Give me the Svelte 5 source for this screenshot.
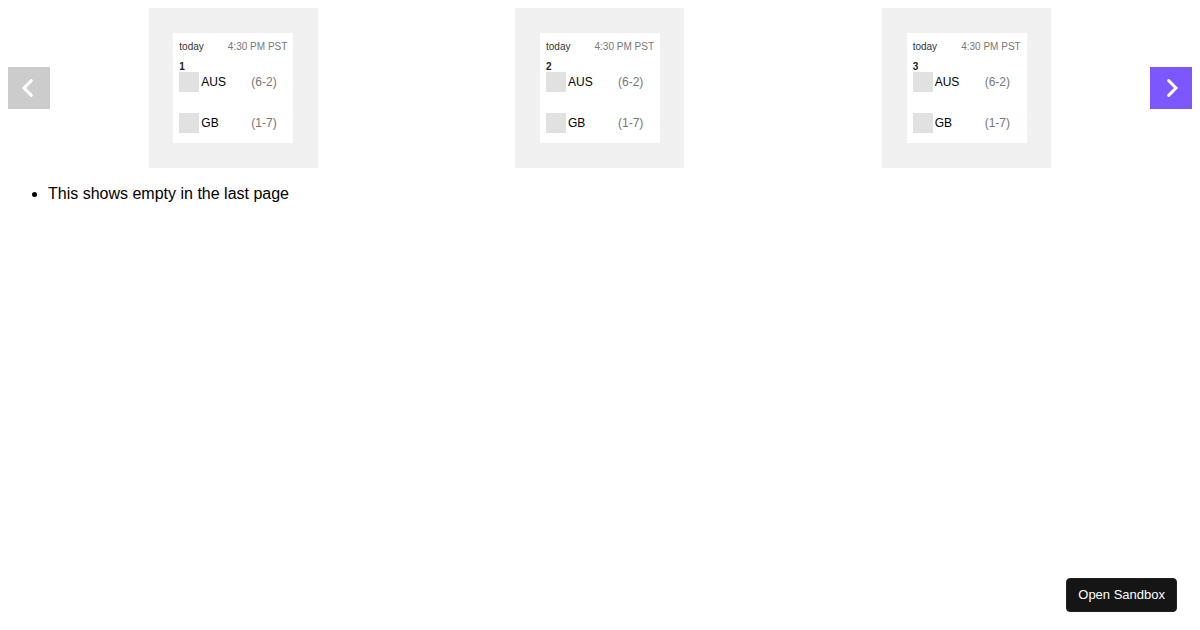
<script lang="ts">
	type Team = { name: string; record: string };
	type Game = { id: number; day: string; time: string; teams: Team[] };

	const PER_PAGE = 3;

	const games: Game[] = Array.from({ length: 8 }, (_, i) => ({
		id: i + 1,
		day: 'today',
		time: '4:30 PM PST',
		teams: [
			{ name: 'AUS', record: '(6-2)' },
			{ name: 'GB', record: '(1-7)' }
		]
	}));

	let page = $state(0);
	const lastPage = Math.ceil(games.length / PER_PAGE) - 1;
	let visible = $derived(games.slice(page * PER_PAGE, (page + 1) * PER_PAGE));
</script>

<div class="app">
	<div class="carousel">
		<button class="arrow" aria-label="Previous" disabled={page === 0} onclick={() => page--}>
			<svg viewBox="0 0 42 42"><path d="M23.3 13.6L16 21l7.3 7.4" /></svg>
		</button>

		<div class="slides">
			{#each visible as game (game.id)}
				<div class="slide">
					<article class="card">
						<div class="when">
							<span class="day">{game.day}</span>
							<span class="time">{game.time}</span>
						</div>
						<div class="number">{game.id}</div>
						<div class="teams">
							{#each game.teams as team}
								<div class="team">
									<span class="flag"></span>
									<span class="name">{team.name}</span>
									<span class="record">{team.record}</span>
								</div>
							{/each}
						</div>
					</article>
				</div>
			{/each}
		</div>

		<button class="arrow" aria-label="Next" disabled={page === lastPage} onclick={() => page++}>
			<svg viewBox="0 0 42 42"><path d="M18.7 13.6L26 21l-7.3 7.4" /></svg>
		</button>
	</div>

	<ul>
		<li>This shows empty in the last page</li>
	</ul>

	<button class="sandbox">Open Sandbox</button>
</div>

<style>
	:global(body) {
		background: #fff;
		font-family: 'Liberation Sans', Arial, sans-serif;
	}

	.app {
		padding: 8px;
	}

	.carousel {
		display: flex;
		align-items: center;
	}

	.arrow {
		width: 42px;
		height: 42px;
		flex-shrink: 0;
		padding: 0;
		border: 0;
		background: #7c57ff;
		color: #fff;
		cursor: pointer;
	}

	.arrow:disabled {
		background: #ccc;
		cursor: default;
	}

	.arrow svg {
		display: block;
		width: 100%;
		fill: none;
		stroke: currentColor;
		stroke-width: 3;
		stroke-linecap: round;
	}

	.slides {
		display: grid;
		grid-template-columns: repeat(3, 1fr);
		flex: 1;
		justify-items: center;
	}

	.slide {
		display: flex;
		justify-content: center;
		min-width: 169px;
		box-sizing: border-box;
		padding: 25px 0;
		background: #f0f0f0;
	}

	.card {
		box-sizing: border-box;
		width: 120px;
		padding: 6px 6px 10px;
		background: #fff;
		font-size: 12px;
	}

	.when {
		display: flex;
		justify-content: space-between;
		font-size: 10px;
		line-height: 16px;
		white-space: nowrap;
	}

	.day {
		color: #333;
	}

	.time {
		color: #777;
	}

	.number {
		margin-top: 7px;
		color: #222;
		font-size: 10px;
		font-weight: bold;
		line-height: 10px;
	}

	.teams {
		display: grid;
		gap: 21px;
	}

	.team {
		display: grid;
		grid-template-columns: 20px 1fr 36px;
		column-gap: 2px;
		align-items: center;
		height: 20px;
	}

	.flag {
		height: 20px;
		background: #e1e1e1;
	}

	.record {
		color: #777;
	}

	ul {
		margin: 16px 0;
		padding-left: 40px;
		line-height: 20px;
	}

	.sandbox {
		position: fixed;
		right: 23px;
		bottom: 18px;
		height: 34px;
		padding: 0 11px 1px;
		border: 1px solid #222;
		border-radius: 4px;
		background: #151515;
		color: #fff;
		font-family: inherit;
		font-size: 13px;
	}
</style>
